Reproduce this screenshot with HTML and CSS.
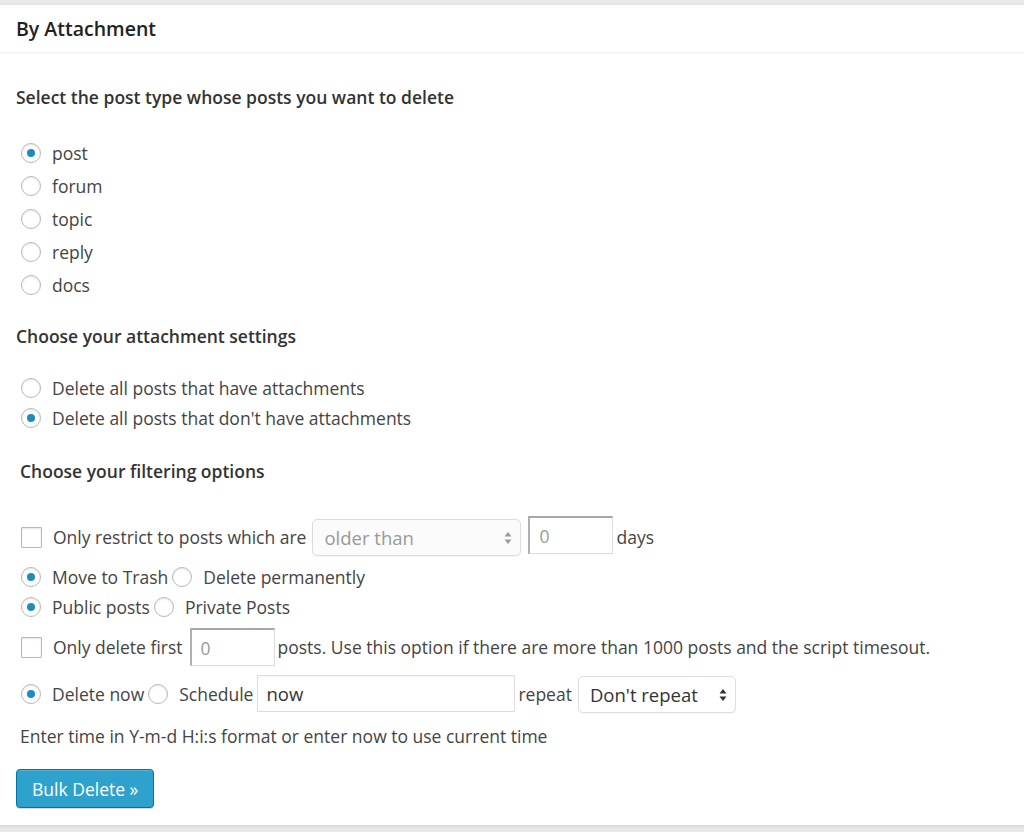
FILE: index.html
```html
<!DOCTYPE html>
<html>
<head>
<meta charset="utf-8">
<title>Bulk Delete - By Attachment</title>
<link rel="stylesheet" href="styles.css">
</head>
<body>
<div class="postbox">
  <h3 class="hndle">By Attachment</h3>
  <div class="inside">
    <h4 class="sec sec-first">Select the post type whose posts you want to delete</h4>
    <div class="list list-types">
      <label class="row"><input type="radio" name="ptype" checked><span>post</span></label>
      <label class="row"><input type="radio" name="ptype"><span>forum</span></label>
      <label class="row"><input type="radio" name="ptype"><span>topic</span></label>
      <label class="row"><input type="radio" name="ptype"><span>reply</span></label>
      <label class="row"><input type="radio" name="ptype"><span>docs</span></label>
    </div>

    <h4 class="sec sec-attach">Choose your attachment settings</h4>
    <div class="list list-attach">
      <label class="row"><input type="radio" name="att"><span>Delete all posts that have attachments</span></label>
      <label class="row"><input type="radio" name="att" checked><span>Delete all posts that don't have attachments</span></label>
    </div>

    <h4 class="sec sec-filter">Choose your filtering options</h4>
    <div class="filters">
      <div class="row row-restrict">
        <input type="checkbox">
        <span class="lbl">Only restrict to posts which are</span>
        <span class="select-wrap sel-older">
          <select class="sel sel-muted"><option>older than</option><option>newer than</option></select>
          <svg class="arrows" width="8" height="14" viewBox="0 0 8 14"><path d="M4 1 L7.5 5.5 L0.5 5.5 Z M4 13 L7.5 8.5 L0.5 8.5 Z" fill="#9a9a9a"/></svg>
        </span>
        <input type="text" class="num num-days" value="0">
        <span class="lbl-after">days</span>
      </div>
      <div class="row row-short">
        <input type="radio" name="trash" checked><span class="lbl">Move to Trash</span>
        <input type="radio" name="trash"><span class="lbl">Delete permanently</span>
      </div>
      <div class="row row-short">
        <input type="radio" name="priv" checked><span class="lbl">Public posts</span>
        <input type="radio" name="priv"><span class="lbl">Private Posts</span>
      </div>
      <div class="row row-limit">
        <input type="checkbox">
        <span class="lbl">Only delete first</span>
        <input type="text" class="num num-limit" value="0">
        <span class="lbl-after">posts. Use this option if there are more than 1000 posts and the script timesout.</span>
      </div>
      <div class="row row-cron">
        <input type="radio" name="cron" checked><span class="lbl">Delete now</span>
        <input type="radio" name="cron"><span class="lbl">Schedule</span>
        <input type="text" class="when" value="now">
        <span class="lbl-after">repeat</span>
        <span class="select-wrap sel-repeat">
          <select class="sel"><option>Don't repeat</option><option>Hourly</option><option>Daily</option></select>
          <svg class="arrows" width="8" height="14" viewBox="0 0 8 14"><path d="M4 1 L7.5 5.5 L0.5 5.5 Z M4 13 L7.5 8.5 L0.5 8.5 Z" fill="#333"/></svg>
        </span>
      </div>
      <p class="hint">Enter time in Y-m-d H:i:s format or enter now to use current time</p>
    </div>

    <p class="submit"><button type="button" class="button-primary">Bulk Delete &raquo;</button></p>
  </div>
</div>
</body>
</html>
```

FILE: styles.css
```css
html, body {
  margin: 0;
  padding: 0;
}
body {
  background: #e9e9e9;
  font-family: "Open Sans", "Liberation Sans", sans-serif;
  font-size: 17.5px;
  color: #444;
  padding-top: 4px;
  height: 832px;
  box-sizing: border-box;
  overflow: hidden;
}
.postbox {
  background: #fff;
  border-top: 1px solid #e2e2e2;
  border-bottom: 1px solid #dcdcdc;
  box-shadow: 0 1px 2px rgba(0,0,0,0.06);
  height: 822px;
  box-sizing: border-box;
}
.hndle {
  margin: 0;
  height: 48px;
  box-sizing: border-box;
  border-bottom: 1px solid #eeeeee;
  padding: 0 16px;
  display: flex;
  align-items: center;
  font-size: 19.5px;
  font-weight: 600;
  color: #222;
}
.inside {
  padding: 0 16px 0 16px;
}
.sec {
  margin: 0;
  font-size: 17.5px;
  font-weight: 600;
  line-height: 24px;
  color: #333;
}
.sec-first { padding-top: 32px; }
.sec-attach { margin-top: 23px; }
.sec-filter { margin-top: 26px; padding-left: 4px; }

.list-types { margin-top: 27px; }
.list-types .row { height: 33px; }
.list-attach { margin-top: 25px; }
.list-attach .row { height: 30px; }

.row {
  display: flex;
  align-items: center;
  padding-left: 4px;
}
.row span, .lbl, .lbl-after {
  white-space: nowrap;
}

input[type=radio], input[type=checkbox] {
  -webkit-appearance: none;
  appearance: none;
  margin: 0 11px 0 1px;
  width: 20px;
  height: 20px;
  border: 1px solid #b4b9be;
  background: #fff;
  box-shadow: inset 0 1px 2px rgba(0,0,0,0.1);
  box-sizing: border-box;
  flex: none;
  position: relative;
}
input[type=radio] {
  border-radius: 50%;
}
input[type=radio]:checked::before {
  content: "";
  position: absolute;
  left: 5px;
  top: 5px;
  width: 8px;
  height: 8px;
  border-radius: 50%;
  background: #1e8cbe;
}
input[type=checkbox] {
  width: 21px;
  height: 21px;
  border-radius: 1px;
}
.row .lbl + input[type=radio] {
  margin-left: 4px;
}

.filters { margin-top: 34px; }
.row-restrict { height: 40px; }
.row-short { height: 30px; }
.row-restrict + .row-short { margin-top: 5px; }
.row-limit { height: 40px; margin-top: 5px; }
.row-cron { height: 40px; margin-top: 7px; }

.select-wrap {
  position: relative;
  display: inline-block;
  flex: none;
}
.sel {
  -webkit-appearance: none;
  appearance: none;
  font-family: inherit;
  font-size: 18.5px;
  border: 1px solid #dddddd;
  border-radius: 5px;
  background: #fff;
  box-sizing: border-box;
  padding: 0 11px;
  margin: 0;
  color: #333;
  box-shadow: 0 1px 1px rgba(0,0,0,0.04);
}
.sel-muted { color: #999; background: #fbfbfb; }
.sel-older { margin-left: 6px; }
.sel-older .sel { width: 209px; height: 37px; }
.sel-repeat { margin-left: 6px; }
.sel-repeat .sel { width: 158px; height: 37px; }
.arrows {
  position: absolute;
  right: 9px;
  top: 12px;
  pointer-events: none;
}

.num {
  font-family: inherit;
  font-size: 17.5px;
  color: #999;
  box-sizing: border-box;
  height: 38px;
  width: 85px;
  margin: 0 3px 0 7px;
  padding: 0 9px;
  border-top: 2px solid #a6a6a6;
  border-left: 2px solid #b0b0b0;
  border-right: 1px solid #dcdcdc;
  border-bottom: 1px solid #dcdcdc;
  background: #fff;
}
.num-days { margin-top: -4px; }
.num-limit { margin-left: 7px; }

.when {
  font-family: inherit;
  font-size: 18.5px;
  color: #333;
  width: 258px;
  height: 37px;
  box-sizing: border-box;
  border: 1px solid #dddddd;
  margin: 0 3px 0 4px;
  padding: 0 8px;
  box-shadow: inset 0 1px 2px rgba(0,0,0,0.04);
  background: #fff;
  align-self: flex-start;
  margin-top: 1px;
}

.hint {
  margin: 10px 0 0 4px;
  line-height: 24px;
}

.submit {
  margin: 21px 0 0 0;
}
.button-primary {
  font-family: inherit;
  font-size: 17.5px;
  color: #fff;
  background: #2ea2cc;
  border: 1px solid #0074a2;
  border-radius: 4px;
  box-shadow: inset 0 1px 0 rgba(120,200,230,0.5), 0 1px 0 rgba(0,0,0,0.15);
  height: 39px;
  padding: 0 15px;
  cursor: pointer;
}
```
